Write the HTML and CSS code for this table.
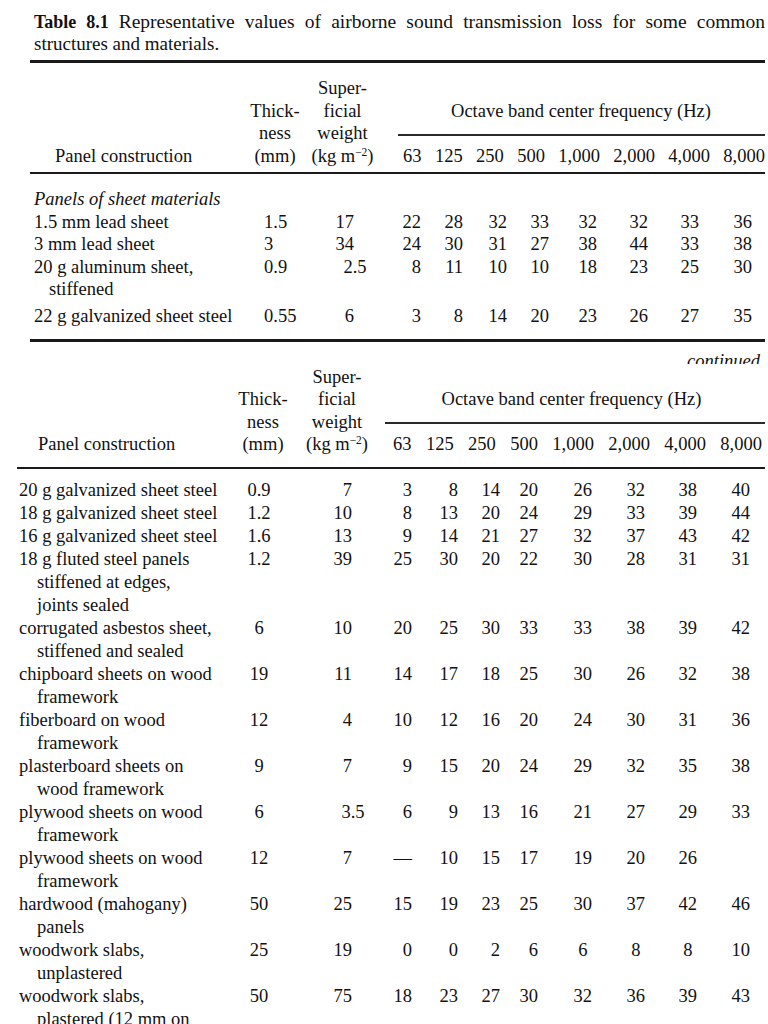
FILE: index.html
```html
<!DOCTYPE html>
<html lang="en">
<head>
<meta charset="utf-8">
<title>Table 8.1</title>
<link rel="stylesheet" href="styles.css">
</head>
<body>
<div class="caption"><span class="cap-line"><b>Table 8.1</b><span class="gap"></span>Representative values of airborne sound transmission loss for some common</span><span class="cap-line2">structures and materials.</span></div>
<div class="rule thick r1"></div>

<section class="tbl p1">
  <div class="head">
    <div class="h-super">Super-</div>
    <div class="h-thick">Thick-</div>
    <div class="h-ficial">ficial</div>
    <div class="h-octave">Octave band center frequency (Hz)</div>
    <div class="h-ness">ness</div>
    <div class="h-weight">weight</div>
    <div class="h-uline"></div>
    <div class="h-panel">Panel construction</div>
    <div class="h-mm">(mm)</div>
    <div class="h-kg">(kg m<sup>−2</sup>)</div>
    <div class="h-freqs"><span>63</span><span>125</span><span>250</span><span>500</span><span>1,000</span><span>2,000</span><span>4,000</span><span>8,000</span></div>
  </div>
</section>
<div class="rule r1 hr1"></div>

<section class="tbl p1 body1">
  <div class="row"><div class="lbl group">Panels of sheet materials</div></div>
  <div class="row"><div class="lbl">1.5 mm lead sheet</div><div class="th">1.5</div><div class="wt">17</div><div class="n">22</div><div class="n">28</div><div class="n">32</div><div class="n">33</div><div class="n">32</div><div class="n">32</div><div class="n">33</div><div class="n">36</div></div>
  <div class="row"><div class="lbl">3 mm lead sheet</div><div class="th">3</div><div class="wt">34</div><div class="n">24</div><div class="n">30</div><div class="n">31</div><div class="n">27</div><div class="n">38</div><div class="n">44</div><div class="n">33</div><div class="n">38</div></div>
  <div class="row"><div class="lbl">20 g aluminum sheet,<br>stiffened</div><div class="th">0.9</div><div class="wt">2<span class="frac">.5</span></div><div class="n">8</div><div class="n">11</div><div class="n">10</div><div class="n">10</div><div class="n">18</div><div class="n">23</div><div class="n">25</div><div class="n">30</div></div>
  <div class="row last"><div class="lbl">22 g galvanized sheet steel</div><div class="th">0.55</div><div class="wt">6</div><div class="n">3</div><div class="n">8</div><div class="n">14</div><div class="n">20</div><div class="n">23</div><div class="n">26</div><div class="n">27</div><div class="n">35</div></div>
</section>
<div class="rule thick r1 bottom1"></div>

<div class="continued"><span>continued</span></div>

<section class="tbl p2">
  <div class="head">
    <div class="h-super">Super-</div>
    <div class="h-thick">Thick-</div>
    <div class="h-ficial">ficial</div>
    <div class="h-octave">Octave band center frequency (Hz)</div>
    <div class="h-ness">ness</div>
    <div class="h-weight">weight</div>
    <div class="h-uline"></div>
    <div class="h-panel">Panel construction</div>
    <div class="h-mm">(mm)</div>
    <div class="h-kg">(kg m<sup>−2</sup>)</div>
    <div class="h-freqs"><span>63</span><span>125</span><span>250</span><span>500</span><span>1,000</span><span>2,000</span><span>4,000</span><span>8,000</span></div>
  </div>
</section>
<div class="rule r2"></div>

<section class="tbl p2 body2">
  <div class="row"><div class="lbl">20 g galvanized sheet steel</div><div class="th">0.9</div><div class="wt">7</div><div class="n">3</div><div class="n">8</div><div class="n">14</div><div class="n">20</div><div class="n">26</div><div class="n">32</div><div class="n">38</div><div class="n">40</div></div>
  <div class="row"><div class="lbl">18 g galvanized sheet steel</div><div class="th">1.2</div><div class="wt">10</div><div class="n">8</div><div class="n">13</div><div class="n">20</div><div class="n">24</div><div class="n">29</div><div class="n">33</div><div class="n">39</div><div class="n">44</div></div>
  <div class="row"><div class="lbl">16 g galvanized sheet steel</div><div class="th">1.6</div><div class="wt">13</div><div class="n">9</div><div class="n">14</div><div class="n">21</div><div class="n">27</div><div class="n">32</div><div class="n">37</div><div class="n">43</div><div class="n">42</div></div>
  <div class="row"><div class="lbl">18 g fluted steel panels<br>stiffened at edges,<br>joints sealed</div><div class="th">1.2</div><div class="wt">39</div><div class="n">25</div><div class="n">30</div><div class="n">20</div><div class="n">22</div><div class="n">30</div><div class="n">28</div><div class="n">31</div><div class="n">31</div></div>
  <div class="row"><div class="lbl">corrugated asbestos sheet,<br>stiffened and sealed</div><div class="th">6</div><div class="wt">10</div><div class="n">20</div><div class="n">25</div><div class="n">30</div><div class="n">33</div><div class="n">33</div><div class="n">38</div><div class="n">39</div><div class="n">42</div></div>
  <div class="row"><div class="lbl">chipboard sheets on wood<br>framework</div><div class="th">19</div><div class="wt">11</div><div class="n">14</div><div class="n">17</div><div class="n">18</div><div class="n">25</div><div class="n">30</div><div class="n">26</div><div class="n">32</div><div class="n">38</div></div>
  <div class="row"><div class="lbl">fiberboard on wood<br>framework</div><div class="th">12</div><div class="wt">4</div><div class="n">10</div><div class="n">12</div><div class="n">16</div><div class="n">20</div><div class="n">24</div><div class="n">30</div><div class="n">31</div><div class="n">36</div></div>
  <div class="row"><div class="lbl">plasterboard sheets on<br>wood framework</div><div class="th">9</div><div class="wt">7</div><div class="n">9</div><div class="n">15</div><div class="n">20</div><div class="n">24</div><div class="n">29</div><div class="n">32</div><div class="n">35</div><div class="n">38</div></div>
  <div class="row"><div class="lbl">plywood sheets on wood<br>framework</div><div class="th">6</div><div class="wt">3<span class="frac">.5</span></div><div class="n">6</div><div class="n">9</div><div class="n">13</div><div class="n">16</div><div class="n">21</div><div class="n">27</div><div class="n">29</div><div class="n">33</div></div>
  <div class="row"><div class="lbl">plywood sheets on wood<br>framework</div><div class="th">12</div><div class="wt">7</div><div class="n">—</div><div class="n">10</div><div class="n">15</div><div class="n">17</div><div class="n">19</div><div class="n">20</div><div class="n">26</div><div class="n"></div></div>
  <div class="row"><div class="lbl">hardwood (mahogany)<br>panels</div><div class="th">50</div><div class="wt">25</div><div class="n">15</div><div class="n">19</div><div class="n">23</div><div class="n">25</div><div class="n">30</div><div class="n">37</div><div class="n">42</div><div class="n">46</div></div>
  <div class="row"><div class="lbl">woodwork slabs,<br>unplastered</div><div class="th">25</div><div class="wt">19</div><div class="n">0</div><div class="n">0</div><div class="n">2</div><div class="n">6</div><div class="n s">6</div><div class="n s">8</div><div class="n s">8</div><div class="n">10</div></div>
  <div class="row"><div class="lbl">woodwork slabs,<br>plastered (12 mm on</div><div class="th">50</div><div class="wt">75</div><div class="n">18</div><div class="n">23</div><div class="n">27</div><div class="n">30</div><div class="n">32</div><div class="n">36</div><div class="n">39</div><div class="n">43</div></div>
</section>
</body>
</html>
```

FILE: styles.css
```css
* { box-sizing: border-box; margin: 0; padding: 0; }

html, body { background: #fff; }

body {
  width: 768px;
  height: 1024px;
  overflow: hidden;
  color: #111;
  font-family: "Liberation Serif", "Times New Roman", serif;
  font-size: 18.5px;
}

/* caption */
.caption {
  margin: 11px 3px 0 34px;
  font-size: 19.5px;
  line-height: 21px;
}
.cap-line {
  display: block;
  white-space: nowrap;
  text-align: justify;
  text-align-last: justify;
}
.cap-line2 { display: block; font-size: 19px; }
.caption b { font-weight: 700; font-size: 18px; }
.gap { display: inline-block; width: 10px; }

/* rules */
.rule { height: 2px; background: #1a1a1a; margin-right: 3px; }
.rule.thick { height: 3px; }
.r1 { margin-left: 30px; margin-top: 6px; }
.hr1 { margin-top: 5px; }
.bottom1 { margin-top: 11px; }
.r2 { margin-left: 17px; margin-top: 11px; }

/* tables: shared column templates */
.p1 { --cols: 211px 60px 75px 41px 42px 44px 42px 48px 51px 51px 53px 13px; margin-left: 34px; }
.p2 { --cols: 211px 66px 82px 34px 46px 42px 38px 54px 53px 52px 53px 15px; margin-left: 19px; }

.head {
  display: grid;
  grid-template-columns: var(--cols);
  grid-template-rows: repeat(4, 22.5px);
  line-height: 22.5px;
  white-space: nowrap;
}
.p1 .head { margin-top: 14px; }
.p2 .head { margin-top: 2px; }

.h-super  { grid-column: 3; grid-row: 1; text-align: center; }
.h-thick  { grid-column: 2; grid-row: 2; text-align: center; }
.h-ficial { grid-column: 3; grid-row: 2; text-align: center; }
.h-octave { grid-column: 4 / -1; grid-row: 2; text-align: center; }
.h-ness   { grid-column: 2; grid-row: 3; text-align: center; }
.h-weight { grid-column: 3; grid-row: 3; text-align: center; }
.h-uline  { grid-column: 4 / -1; grid-row: 3; align-self: center; height: 2px; background: #2a2a2a; margin-top: 3px; }
.h-panel  { grid-column: 1; grid-row: 4; }
.h-mm     { grid-column: 2; grid-row: 4; text-align: center; }
.h-kg     { grid-column: 3; grid-row: 4; text-align: center; }
.h-freqs  { grid-column: 4 / -1; grid-row: 4; display: flex; justify-content: space-between; }

.h-kg sup { font-size: 0.62em; vertical-align: 0.55em; line-height: 0; }

.p1 .h-octave { padding-left: 17px; }
.p1 .h-uline  { margin-left: 18px; }
.p1 .h-panel  { padding-left: 21px; }
.p1 .h-freqs  { padding-left: 23px; }

.p2 .h-uline  { margin-left: 7px; }
.p2 .h-panel  { padding-left: 19px; }
.p2 .h-freqs  { padding-left: 15px; padding-right: 3px; }

/* body rows */
.row {
  display: grid;
  grid-template-columns: var(--cols);
  white-space: nowrap;
}
.body1 { margin-top: 14px; }
.body1 .row { line-height: 22.5px; }
.body1 .row.last { margin-top: 4.5px; }
.body2 { margin-top: 10.5px; }
.body2 .row { line-height: 23px; }

.lbl { padding-left: 15px; text-indent: -15px; }
.p2 .lbl { padding-left: 18px; text-indent: -18px; }
.group { font-style: italic; grid-column: 1 / -1; }

.p1 .th { padding-left: 19px; }
.p2 .th { text-align: center; padding-right: 8px; }

.wt { text-align: right; padding-right: 26px; }
.frac { margin-right: -0.68em; }

.n { text-align: right; }
.n.s { padding-right: 4.5px; }

/* page-break "continued" fragment */
.continued {
  margin-top: 8px;
  height: 14px;
  overflow: hidden;
  text-align: right;
  padding-right: 8px;
  font-style: italic;
  line-height: 22px;
}
```
